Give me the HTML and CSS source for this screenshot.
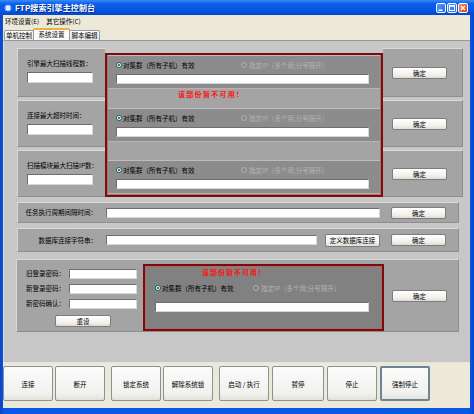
FILE: index.html
```html
<!DOCTYPE html>
<html lang="zh-CN">
<head>
<meta charset="utf-8">
<title>FTP搜索引擎主控制台</title>
<link rel="stylesheet" href="styles.css">
</head>
<body>
<div class="window">
  <div class="titlebar">
    <svg class="app-icon" width="8" height="8" viewBox="0 0 8 8">
      <path d="M4 0.5V7.5M0.5 4H7.5M1.5 1.5L6.5 6.5M6.5 1.5L1.5 6.5" stroke="#fff" stroke-width="1.1"/>
      <circle cx="4" cy="4" r="1.3" fill="#dfe8ff"/>
    </svg>
    <span class="title">FTP搜索引擎主控制台</span>
    <div class="caption-btns">
      <span class="cbtn"><svg width="10" height="10" viewBox="0 0 10 10"><rect x="2.5" y="6.5" width="4" height="1.5" fill="#fff"/></svg></span>
      <span class="cbtn"><svg width="10" height="10" viewBox="0 0 10 10"><rect x="2.5" y="2.5" width="5" height="5" fill="none" stroke="#fff" stroke-width="1"/><rect x="2.5" y="2.5" width="5" height="1.3" fill="#fff"/></svg></span>
      <span class="cbtn close"><svg width="10" height="10" viewBox="0 0 10 10"><path d="M3 3L7 7M7 3L3 7" stroke="#fff" stroke-width="1.4"/></svg></span>
    </div>
  </div>
  <div class="client">
    <div class="menubar"><span>环境设置(E)</span><span>其它操作(C)</span></div>
    <div class="tabs">
      <span class="tab t1">单机控制</span>
      <span class="tab active">系统设置</span>
      <span class="tab t3">脚本编辑</span>
    </div>
    <div class="page">
      <div class="cluster">
        <div class="cl-left r1">
          <div class="lbl">引擎最大扫描线程数：</div>
          <input class="field w66" type="text">
        </div>
        <div class="cl-left r2">
          <div class="lbl">连接最大超时时间：</div>
          <input class="field w66" type="text">
        </div>
        <div class="cl-left r3">
          <div class="lbl">扫描模块最大扫描IP数：</div>
          <input class="field w66" type="text">
        </div>
        <div class="redbox">
          <div class="ipanel">
            <div class="radios"><span class="radio on"><i></i>对集群（所有子机）有效</span><span class="radio off"><i></i>指定IP（多个用;分号隔开）</span></div>
            <input class="field w253" type="text">
          </div>
          <div class="warn">该部份暂不可用！</div>
          <div class="ipanel">
            <div class="radios"><span class="radio on"><i></i>对集群（所有子机）有效</span><span class="radio off"><i></i>指定IP（多个用;分号隔开）</span></div>
            <input class="field w253" type="text">
          </div>
          <div class="gap18"></div>
          <div class="ipanel">
            <div class="radios"><span class="radio on"><i></i>对集群（所有子机）有效</span><span class="radio off"><i></i>指定IP（多个用;分号隔开）</span></div>
            <input class="field w253" type="text">
          </div>
        </div>
        <div class="cl-right r1"><button class="btn ok">确定</button></div>
        <div class="cl-right r2"><button class="btn ok">确定</button></div>
        <div class="cl-right r3"><button class="btn ok">确定</button></div>
      </div>

      <div class="rowbox row4">
        <span class="rlabel">任务执行周期间隔时间：</span>
        <input class="field w274" type="text">
        <button class="btn ok">确定</button>
      </div>

      <div class="rowbox row5">
        <span class="rlabel">数据库连接字符串：</span>
        <input class="field w211" type="text">
        <button class="btn dbdef">定义数据库连接</button>
        <button class="btn ok">确定</button>
      </div>

      <div class="pwdbox">
        <div class="pwd-left">
          <div class="pwd-row"><span class="plabel">旧登录密码：</span><input class="field w68" type="password"></div>
          <div class="pwd-row"><span class="plabel">新登录密码：</span><input class="field w68" type="password"></div>
          <div class="pwd-row"><span class="plabel">新密码确认：</span><input class="field w68" type="password"></div>
          <button class="btn reset">重设</button>
        </div>
        <div class="redbox2">
          <div class="warn2">该部份暂不可用！</div>
          <div class="radios r2w"><span class="radio on"><i></i>对集群（所有子机）有效</span><span class="radio off"><i></i>指定IP（多个用;分号隔开）</span></div>
          <input class="field w214" type="text">
        </div>
        <div class="pwd-right"><button class="btn ok">确定</button></div>
      </div>
    </div>
    <div class="actions">
      <button class="abtn">连接</button>
      <button class="abtn g2">断开</button>
      <button class="abtn g6">锁定系统</button>
      <button class="abtn g2">解除系统锁</button>
      <button class="abtn g6">启动 / 执行</button>
      <button class="abtn g3 wide">暂停</button>
      <button class="abtn g3">停止</button>
      <button class="abtn g3 default">强制停止</button>
    </div>
  </div>
</div>
</body>
</html>
```
FILE: styles.css
```css
* { box-sizing: border-box; }
html, body { margin: 0; padding: 0; }
body {
  width: 474px;
  height: 414px;
  overflow: hidden;
  font-family: "Noto Sans CJK SC", "Noto Sans", sans-serif;
  font-size: 6.5px;
  color: #000;
  background: #0a54e2;
}
.window {
  width: 474px;
  height: 414px;
  display: flex;
  flex-direction: column;
  background: linear-gradient(90deg, #0a45c8, #0b58e6 1%, #0b58e6 99%, #0a45c8);
  padding: 0 4px 6px 3px;
}
.titlebar {
  height: 15px;
  margin: 0 -4px 0 -3px;
  display: flex;
  align-items: center;
  padding-left: 4px;
  background: linear-gradient(#3a8cf8, #0a5ee9 25%, #0556e3 70%, #0446cf);
}
.app-icon { flex: none; }
.title {
  margin-left: 3px;
  color: #fff;
  font-weight: bold;
  font-size: 8px;
  line-height: 10px;
  text-shadow: 1px 1px 0 #0a2a80;
  letter-spacing: 0.1px;
}
.caption-btns {
  margin-left: auto;
  margin-right: 6px;
  display: flex;
  gap: 1px;
}
.cbtn {
  width: 10px;
  height: 10px;
  border: 1px solid #fff;
  border-radius: 2px;
  background: linear-gradient(135deg, #5a9cff, #2264e8);
  display: flex;
  align-items: center;
  justify-content: center;
  overflow: hidden;
}
.cbtn svg { flex: none; }
.cbtn.close { background: linear-gradient(135deg, #f08a6a, #d8401c); }

.client {
  flex: 1;
  background: #ece9d8;
  display: flex;
  flex-direction: column;
}
.menubar {
  height: 13px;
  display: flex;
  align-items: center;
  gap: 7px;
  padding-left: 2px;
  line-height: 9px;
}
.tabs {
  height: 12px;
  display: flex;
  align-items: flex-end;
  padding-left: 1px;
}
.tab {
  height: 10px;
  border: 1px solid #919b9c;
  border-bottom: none;
  border-radius: 2px 2px 0 0;
  background: linear-gradient(#ffffff, #ecebe4);
  line-height: 8px;
  text-align: center;
}
.tab.t1 { width: 30px; }
.tab.active {
  width: 37px;
  height: 12px;
  margin: 0 -1px;
  position: relative;
  z-index: 1;
  background: #fafaf8;
  border-top: 2px solid #f0b040;
  line-height: 9px;
}
.tab.t3 { width: 31px; }

.page {
  height: 322px;
  background: #c7c7c7;
  border-top: 1px solid #919b9c;
  border-left: 1px solid #dcdcdc;
  padding: 7px 0 0 13px;
}
.cluster {
  width: 446px;
  height: 149px;
  display: grid;
  grid-template-columns: 88px 278px 80px;
  grid-template-rows: 49px 47px 47px;
  row-gap: 3px;
}
.cl-left, .cl-right {
  background: #a4a4a4;
  border-top: 1px solid #dadada;
  border-bottom: 1px solid #8e8e8e;
}
.cl-left {
  grid-column: 1;
  border-left: 1px solid #dadada;
  padding: 10px 0 0 9px;
}
.cl-right {
  grid-column: 3;
  border-right: 1px solid #8e8e8e;
  display: flex;
  align-items: center;
  padding-left: 9px;
}
.r1 { grid-row: 1; }
.r2 { grid-row: 2; }
.r3 { grid-row: 3; }
.lbl {
  line-height: 9px;
  white-space: nowrap;
}
.cl-left .field { margin-top: 4px; }

.field {
  display: block;
  height: 11px;
  padding: 0;
  margin: 0;
  background: #fff;
  border: 1px solid;
  border-color: #6e6e6e #d8d8d8 #d8d8d8 #6e6e6e;
  font: inherit;
  outline: none;
}
.w66 { width: 66px; }
.w68 { width: 68px; height: 10px; }
.w253 { width: 253px; height: 10px; }
.w274 { width: 274px; height: 10px; margin-left: 9px; }
.w211 { width: 211px; height: 10px; margin-left: 9px; }
.w214 { width: 214px; height: 10px; margin-top: 10px; }

.redbox {
  grid-column: 2;
  grid-row: 1 / 4;
  margin-top: 5px;
  border: 2px solid #7c0c0c;
  box-shadow: inset 0 0 0 1px #b07070;
  background: #a4a4a4;
  padding: 0 1px 1px;
  display: flex;
  flex-direction: column;
}
.ipanel {
  height: 34px;
  flex: none;
  background: #8c8c8c;
  border-top: 1px solid #bdbdbd;
  border-bottom: 1px solid #b4b4b4;
  padding: 5px 0 0 8px;
}
.ipanel .field { margin-top: 5px; }
.radios {
  display: flex;
  height: 8px;
  align-items: center;
  line-height: 8px;
  white-space: nowrap;
}
.radio { display: flex; align-items: center; }
.radio i {
  width: 6px;
  height: 6px;
  border-radius: 50%;
  margin-right: 1px;
  flex: none;
}
.radio.on { width: 125px; }
.radio.on i {
  border: 1px solid #2c5c8c;
  background: radial-gradient(circle, #2e9a2e 0 1.1px, #ffffff 1.6px);
}
.radio.off { color: #b3b3b3; }
.radio.off i { border: 1px solid #b0b0b0; margin-right: 2px; }
.warn {
  height: 19px;
  flex: none;
  padding-left: 70px;
  padding-top: 1px;
  color: #ff1010;
  font-weight: bold;
  font-size: 7px;
  line-height: 9px;
  letter-spacing: 1.3px;
}
.gap18 { height: 18px; flex: none; }

.btn {
  margin: 0;
  padding: 0;
  font: inherit;
  color: #000;
  background: linear-gradient(#ffffff, #f1f0ea 70%, #dedcd3);
  border: 1px solid #7d7d7d;
  border-radius: 2px;
  height: 12px;
  line-height: 10px;
  text-align: center;
}
.btn.ok { width: 55px; }
.rowbox .btn.ok { margin-left: 11px; }
.btn.dbdef { width: 55px; margin-left: 8px; height: 13px; }
.btn.reset { width: 56px; margin: 4px 0 0 29px; }

.rowbox {
  width: 442px;
  display: flex;
  align-items: center;
  background: #a4a4a4;
  border: 1px solid;
  border-color: #dadada #8e8e8e #8e8e8e #dadada;
}
.row4 { height: 21px; margin-top: 5px; }
.row5 { height: 24px; margin-top: 5px; }
.rlabel {
  width: 79px;
  text-align: right;
  white-space: nowrap;
  line-height: 9px;
}

.pwdbox {
  width: 443px;
  height: 73px;
  margin: 7px 0 0 -1px;
  display: flex;
  background: #a4a4a4;
  border: 1px solid;
  border-color: #dadada #8e8e8e #8e8e8e #dadada;
}
.pwd-left {
  width: 126px;
  padding: 6px 0 0 9px;
}
.pwd-row {
  height: 15px;
  display: flex;
  align-items: center;
}
.plabel {
  width: 43px;
  white-space: nowrap;
  line-height: 9px;
}
.redbox2 {
  width: 241px;
  height: 67px;
  margin-top: 4px;
  border: 2px solid #7c0c0c;
  box-shadow: inset 0 0 0 1px #a86a6a;
  background: #818181;
  padding: 0 0 0 10px;
}
.warn2 {
  margin: 2px 0 0 47px;
  color: #ff1010;
  font-weight: bold;
  font-size: 7px;
  line-height: 8px;
  letter-spacing: 1px;
}
.r2w { margin-top: 8px; }
.r2w .radio.on { width: 98px; }
.pwd-right {
  display: flex;
  align-items: center;
  padding-left: 8px;
}

.actions {
  flex: 1;
  display: flex;
  align-items: flex-start;
  padding-top: 3px;
  border-top: 1px solid #e4e4e4;
}
.abtn {
  width: 50px;
  height: 35px;
  margin: 0;
  padding: 0;
  font: inherit;
  color: #000;
  background: linear-gradient(#fbfbfb, #f1f1ee 80%, #e2e2dc);
  border: 1px solid #8c9198;
  border-radius: 2px;
  text-align: center;
}
.abtn.g2 { margin-left: 2px; }
.abtn.g3 { margin-left: 3px; }
.abtn.g6 { margin-left: 6px; }
.abtn.wide { width: 52px; }
.abtn.default { border: 2px solid #6f8396; }
```
